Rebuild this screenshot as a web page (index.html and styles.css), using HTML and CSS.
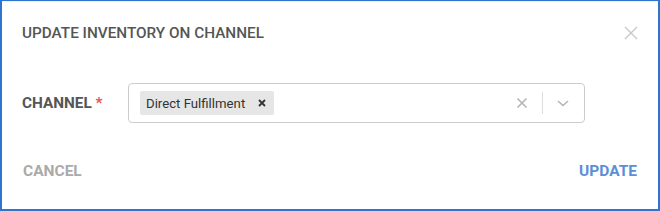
FILE: index.html
```html
<!DOCTYPE html>
<html>
<head>
<meta charset="utf-8">
<link rel="stylesheet" href="styles.css">
</head>
<body>
<div class="dialog">
  <div class="header">
    <h1 class="title">UPDATE INVENTORY ON CHANNEL</h1>
    <button class="close" aria-label="Close">
      <svg width="14" height="14" viewBox="0 0 14 14"><path d="M1 1L13 13M13 1L1 13" stroke="#c8c8c8" stroke-width="1.4" fill="none"/></svg>
    </button>
  </div>
  <div class="body">
    <label class="label">CHANNEL <span class="req">*</span></label>
    <div class="select">
      <div class="values">
        <span class="chip">Direct Fulfillment
          <svg class="chip-x" width="8" height="8" viewBox="0 0 8 8"><path d="M1 1L7 7M7 1L1 7" stroke="#333" stroke-width="1.8" fill="none"/></svg>
        </span>
      </div>
      <div class="indicators">
        <span class="clear">
          <svg width="12" height="12" viewBox="0 0 12 12"><path d="M1.5 1.5L10.5 10.5M10.5 1.5L1.5 10.5" stroke="#b5b5b5" stroke-width="1.6" fill="none"/></svg>
        </span>
        <span class="sep"></span>
        <span class="chev">
          <svg width="14" height="10" viewBox="0 0 14 10"><path d="M2 3L7 7.5L12 3" stroke="#b5b5b5" stroke-width="1.6" fill="none"/></svg>
        </span>
      </div>
    </div>
  </div>
  <div class="footer">
    <button class="btn cancel">CANCEL</button>
    <button class="btn update">UPDATE</button>
  </div>
</div>
</body>
</html>
```
FILE: styles.css
```css
html, body {
  margin: 0;
  padding: 0;
  background: #fff;
}
body {
  width: 660px;
  height: 211px;
  box-sizing: border-box;
  border: 2px solid #2f74d0;
  border-top-width: 1px;
  font-family: Roboto, "Liberation Sans", sans-serif;
}
.dialog {
  height: 100%;
  box-sizing: border-box;
  border-top: 1px solid #f6eeee;
  display: flex;
  flex-direction: column;
}
.header {
  display: flex;
  align-items: center;
  justify-content: space-between;
  padding: 0 20px 0 20px;
  height: 61px;
}
.title {
  margin: 0;
  font-size: 15.3px;
  font-weight: 500;
  color: #555;
}
.close {
  border: 0;
  background: none;
  padding: 0;
  width: 14px;
  height: 14px;
  display: flex;
}
.body {
  display: flex;
  align-items: center;
  padding: 0 73px 0 20px;
  margin-top: 20px;
}
.label {
  width: 106px;
  font-size: 15.3px;
  font-weight: 700;
  color: #555;
}
.req {
  color: #e8505b;
}
.select {
  flex: 1;
  height: 40px;
  box-sizing: border-box;
  border: 1px solid #ccc;
  border-radius: 4px;
  display: flex;
  align-items: center;
}
.values {
  flex: 1;
  padding-left: 11px;
  display: flex;
}
.chip {
  background: #e6e6e6;
  border-radius: 2px;
  height: 24px;
  display: flex;
  align-items: center;
  padding: 0 8px 0 6px;
  font-size: 13.2px;
  color: #333;
}
.chip-x {
  margin-left: 13px;
}
.indicators {
  display: flex;
  align-items: center;
  height: 100%;
}
.clear {
  display: flex;
  padding: 0 14px 0 0;
}
.sep {
  width: 1px;
  height: 22px;
  background: #ddd;
}
.chev {
  display: flex;
  padding: 0 14px 0 13px;
}
.footer {
  display: flex;
  justify-content: space-between;
  align-items: center;
  padding: 0 21px 0 21px;
  margin-top: 39px;
}
.btn {
  border: 0;
  background: none;
  padding: 0;
  font-family: inherit;
  font-size: 15.5px;
  font-weight: 700;
}
.cancel { color: #aaa; }
.update { color: #5a8fd8; }
```
